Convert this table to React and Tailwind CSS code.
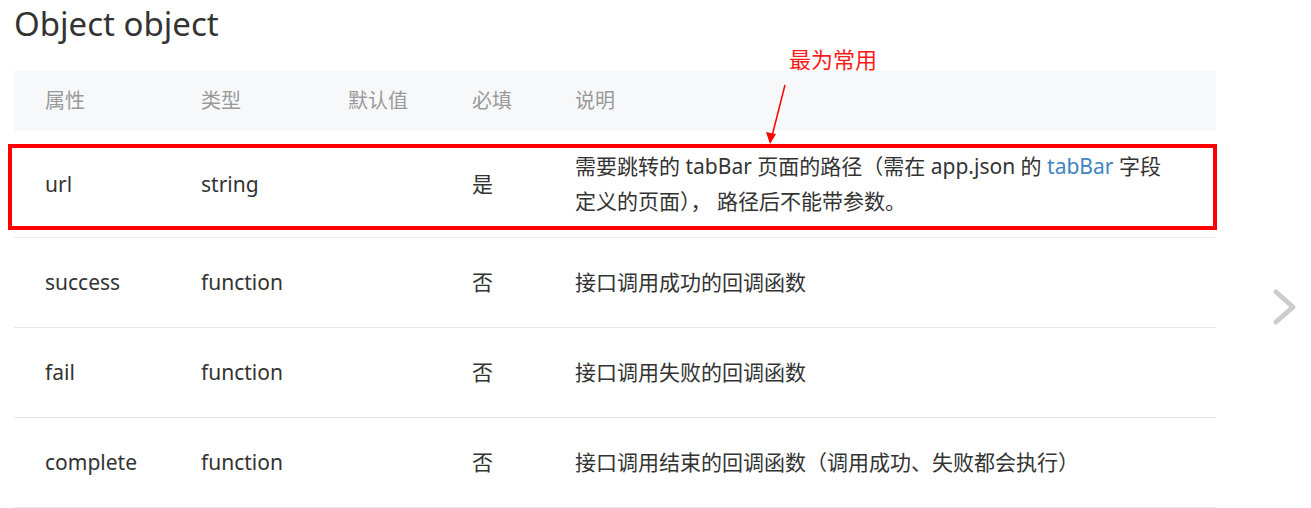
import React from "react";

const font = { fontFamily: '"Noto Sans", "Noto Sans CJK SC", sans-serif' };

const rows = [
  { name: "url", type: "string", req: "是", desc: "first", h: "h-[107px]" },
  { name: "success", type: "function", req: "否", desc: "接口调用成功的回调函数", h: "h-[90px]" },
  { name: "fail", type: "function", req: "否", desc: "接口调用失败的回调函数", h: "h-[90px]" },
  { name: "complete", type: "function", req: "否", desc: "接口调用结束的回调函数（调用成功、失败都会执行）", h: "h-[90px]" },
];

function Row({ r }) {
  return (
    <div className={`flex items-center ${r.h} border-b border-[#e8e8e8] px-[31px] text-[#333] text-[21px] leading-[35px]`}>
      <div className="w-[156px] shrink-0">{r.name}</div>
      <div className="w-[147px] shrink-0">{r.type}</div>
      <div className="w-[124px] shrink-0"></div>
      <div className="w-[103px] shrink-0">{r.req}</div>
      <div className="flex-1 whitespace-nowrap">
        {r.desc === "first" ? (
          <>
            需要跳转的 tabBar 页面的路径（需在 app.json 的 <span className="text-[#4183c4]">tabBar</span> 字段
            <br />
            定义的页面）， 路径后不能带参数。
          </>
        ) : (
          r.desc
        )}
      </div>
    </div>
  );
}

export default function App() {
  return (
    <div className="relative w-[1311px] h-[508px] bg-white overflow-hidden" style={font}>
      <div className="pl-[14px] pt-0 text-[33px] leading-[48px] text-[#333]">Object object</div>
      <div className="ml-[14px] mt-[23px] w-[1202px]">
        <div className="flex items-center h-[60px] bg-[#f7f8fa] px-[31px] text-[#999] text-[20px]">
          <div className="w-[156px] shrink-0">属性</div>
          <div className="w-[147px] shrink-0">类型</div>
          <div className="w-[124px] shrink-0">默认值</div>
          <div className="w-[103px] shrink-0">必填</div>
          <div className="flex-1">说明</div>
        </div>
        {rows.map((r) => (
          <Row key={r.name} r={r} />
        ))}
      </div>

      {/* annotation overlay */}
      <div className="absolute left-[8px] top-[144px] w-[1209px] h-[86px] border-[4px] border-[#ff0000]"></div>
      <div className="absolute left-[789px] top-[44px] text-[22px] leading-[30px] text-[#ff1a1a]">最为常用</div>
      <svg className="absolute left-[760px] top-[80px]" width="40" height="70" viewBox="0 0 40 70">
        <line x1="25" y1="5" x2="12" y2="56" stroke="#ff0000" strokeWidth="1.5" />
        <polygon points="10,64 6,52 16,54" fill="#ff0000" />
      </svg>

      {/* next chevron */}
      <svg className="absolute left-[1270px] top-[286px]" width="30" height="42" viewBox="0 0 30 42">
        <polyline points="6,6 23,21 6,36" fill="none" stroke="#cccccc" strokeWidth="5" strokeLinecap="round" strokeLinejoin="round" />
      </svg>
    </div>
  );
}
